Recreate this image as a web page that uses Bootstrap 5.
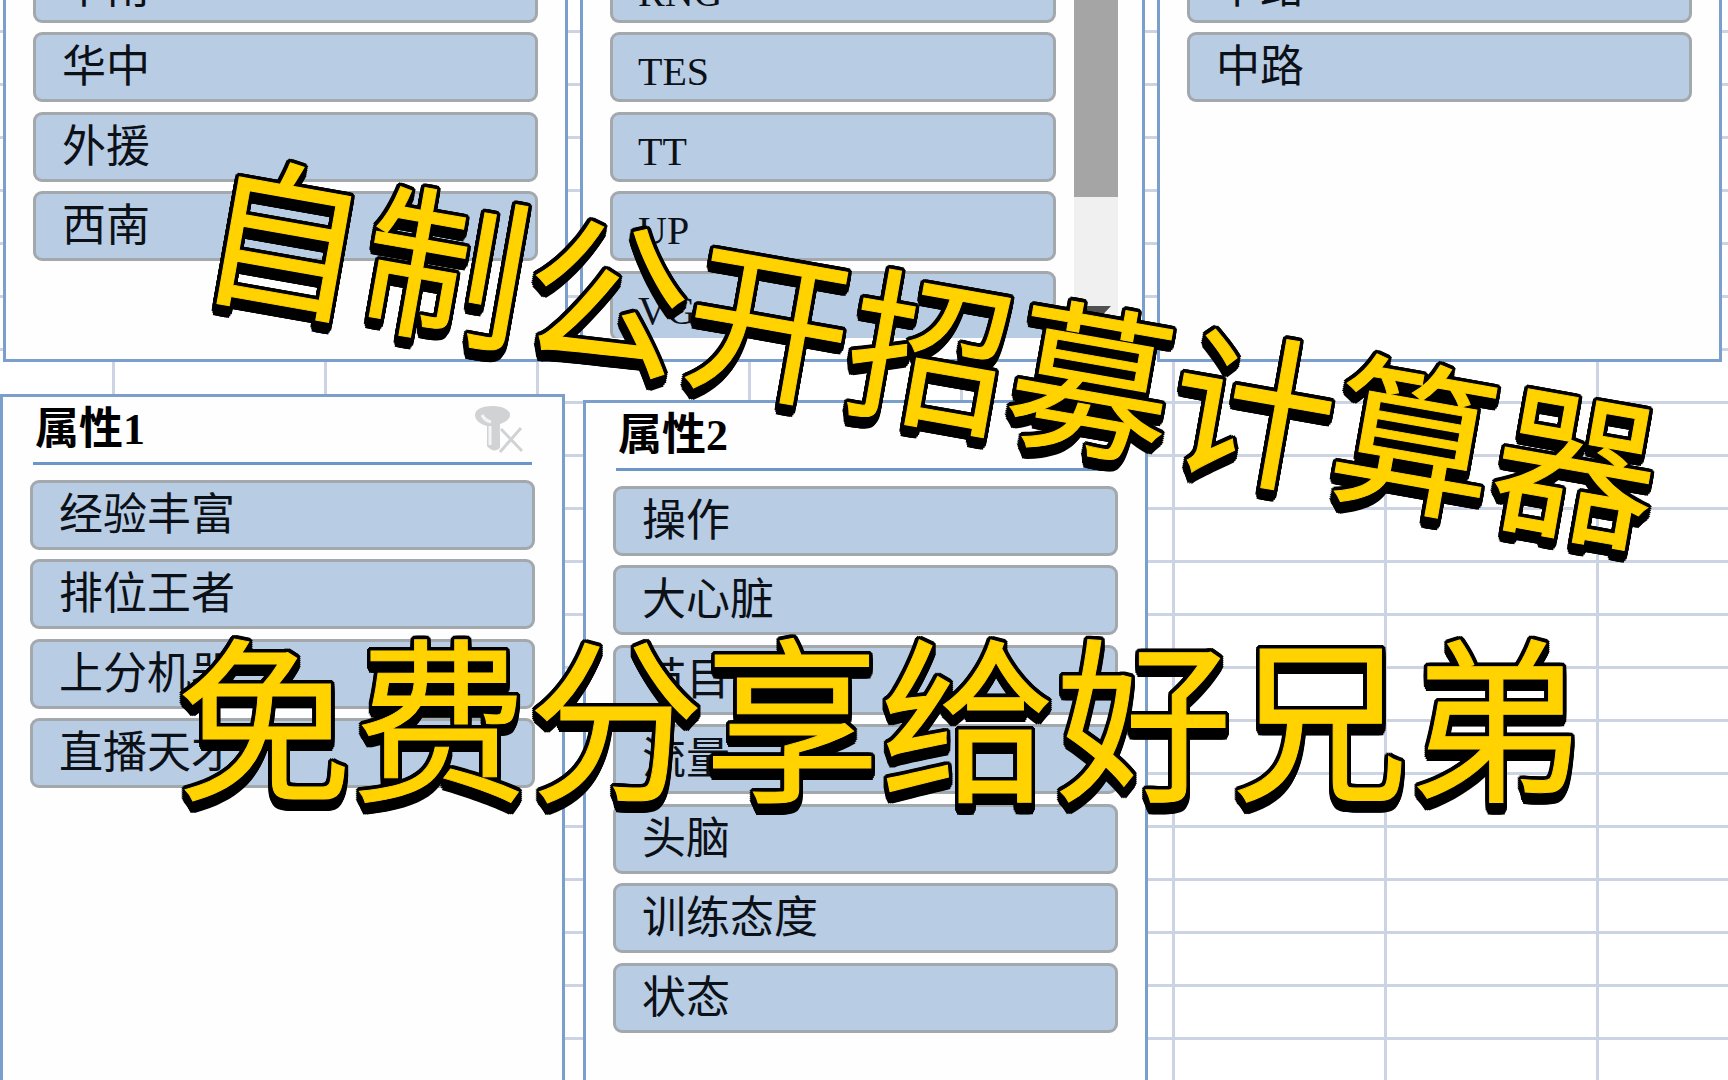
<!DOCTYPE html>
<html lang="zh-CN">
<head>
<meta charset="utf-8">
<meta name="viewport" content="width=device-width, initial-scale=1">
<title>自制公开招募计算器</title>
<link rel="stylesheet" href="https://cdn.jsdelivr.net/npm/bootstrap@5.3.0/dist/css/bootstrap.min.css">
<style>
  body { background: #fff; font-family: "Noto Sans CJK SC", sans-serif; }

  /* Worksheet with its cell lines */
  .sheet {
    height: 100vh;
    background-image:
      linear-gradient(to bottom, #ccd3e3 3px, transparent 3px),
      linear-gradient(to right, #ccd3e3 3px, transparent 3px);
    background-size: 100% 53px, 212px 100%;
    background-position: 0 30px, 112px 0;
  }
  .slicers-top { display: grid; grid-template-columns: repeat(3, 1fr); gap: 12px; padding: 0 6px 0 3px; height: 362px; }
  .slicers-bottom { display: grid; grid-template-columns: repeat(2, 565px); gap: 18px; padding-top: 32px; min-height: calc(100vh - 362px); }

  .slicer { background: #fefefe; border: 3px solid #7a9fcd; padding: 0 27px; min-width: 0; }
  .slicers-top .slicer { border-top: 0; overflow: hidden; }
  .slicers-bottom .slicer { border-bottom: 0; }
  .slicer-lower { margin-top: 6px; }
  .slicer-scroll { padding-right: 24px; padding-bottom: 21px; gap: 18px; }

  .slicer-head { height: 68px; margin: 0 3px 15px; border-bottom: 3px solid #6c96c8; }
  .slicer-head h2 { font-size: 44px; line-height: 56px; font-weight: 700; color: #000; padding-left: 2px; }
  .slicer-head .digit { font-family: "Liberation Serif", serif; }
  .clear-filter { width: 50px; height: 48px; margin: 9px 8px 0 0; }

  .slicer-list { display: flex; flex-direction: column; gap: 9px; }
  .slicers-top .slicer-list { margin-top: -47px; }
  .slicer-item {
    height: 70px; flex: none; width: 100%;
    padding: 0 26px 8px; text-align: left;
    background: #b8cce4; color: #0c1118;
    border: 3px solid #a3a8ad; border-radius: 9px;
    font-size: 44px; line-height: 56px; font-weight: 400;
  }
  .slicer-item:nth-child(even) { margin-bottom: 1px; }
  .latin .slicer-item { font-family: "Liberation Serif", serif; font-size: 40px; padding: 9px 25px 0; }

  .scroll-track { width: 44px; flex: none; background: #f0f0f0; }
  .scroll-thumb { height: 197px; background: #a5a5a5; }

  /* Slanted and straight captions over the sheet */
  .caption-text {
    position: absolute; margin: 0; white-space: nowrap; line-height: 1; font-weight: 400; color: #ffd200;
    -webkit-text-stroke: 1px #ffd200;
    text-shadow:
      4px 0 #000, 3px 3px #000, 0 4px #000, -3px 3px #000, -4px 0 #000, -3px -3px #000, 0 -4px #000, 3px -3px #000,
      4px -2px #000, 2px -4px #000, -2px -4px #000, -4px -2px #000,
      4px 2px #000, -4px 2px #000, 4px 4px #000, -4px 4px #000, 4px 6px #000, -4px 6px #000, 0 8px #000,
      4px 8px #000, -4px 8px #000, 3px 10px #000, -3px 10px #000, 2px 12px #000, -2px 12px #000, 0 12px #000;
    pointer-events: none;
  }
  .caption-slanted { left: 932px; top: 344px; font-size: 164px; transform: translate(-50%, -50%) rotate(10deg); }
  .caption-straight { left: 880px; top: 712px; font-size: 176px; transform: translate(-50%, -50%); }
</style>
</head>
<body>
<main class="sheet position-relative overflow-hidden">
  <div class="slicers-top">
    <section class="slicer" aria-label="地区">
      <div class="slicer-list">
        <button type="button" class="slicer-item">华南</button>
        <button type="button" class="slicer-item">华中</button>
        <button type="button" class="slicer-item">外援</button>
        <button type="button" class="slicer-item">西南</button>
      </div>
    </section>
    <section class="slicer slicer-scroll d-flex" aria-label="战队">
      <div class="flex-grow-1 overflow-hidden">
        <div class="slicer-list latin">
          <button type="button" class="slicer-item">RNG</button>
          <button type="button" class="slicer-item">TES</button>
          <button type="button" class="slicer-item">TT</button>
          <button type="button" class="slicer-item">UP</button>
          <button type="button" class="slicer-item">VG</button>
        </div>
      </div>
      <div class="scroll-track d-flex flex-column justify-content-between align-items-center">
        <div class="scroll-thumb w-100"></div>
        <svg class="mb-3" width="30" height="16" viewBox="0 0 30 16" aria-hidden="true"><path d="M0 0h30L15 16z" fill="#505050"/></svg>
      </div>
    </section>
    <section class="slicer" aria-label="位置">
      <div class="slicer-list">
        <button type="button" class="slicer-item">下路</button>
        <button type="button" class="slicer-item">中路</button>
      </div>
    </section>
  </div>

  <div class="slicers-bottom">
    <section class="slicer">
      <div class="slicer-head d-flex justify-content-between align-items-start">
        <h2 class="m-0">属性<span class="digit">1</span></h2>
        <button type="button" class="clear-filter btn p-0 border-0 d-flex" aria-label="清除筛选器">
          <svg width="50" height="48" viewBox="0 0 50 48" aria-hidden="true">
            <path d="M1 9C1 3 9 0 19 0s17 4 17 9c0 4-4 7-10 9v24c-4 4-9 3-13-2V20C6 18 1 14 1 9z" fill="#d0d2d4"/>
            <path d="M16 20v19M8 9c2 4 5 6 9 7" fill="none" stroke="#f5f5f5" stroke-width="3"/>
            <path d="M27 23l21 22M47 22L26 46" fill="none" stroke="#fff" stroke-width="5"/>
            <path d="M27 23l21 22M47 22L26 46" fill="none" stroke="#d0d2d4" stroke-width="3"/>
          </svg>
        </button>
      </div>
      <div class="slicer-list">
        <button type="button" class="slicer-item">经验丰富</button>
        <button type="button" class="slicer-item">排位王者</button>
        <button type="button" class="slicer-item">上分机器</button>
        <button type="button" class="slicer-item">直播天才</button>
      </div>
    </section>
    <section class="slicer slicer-lower">
      <div class="slicer-head">
        <h2 class="m-0">属性<span class="digit">2</span></h2>
      </div>
      <div class="slicer-list">
        <button type="button" class="slicer-item">操作</button>
        <button type="button" class="slicer-item">大心脏</button>
        <button type="button" class="slicer-item">节目</button>
        <button type="button" class="slicer-item">流量</button>
        <button type="button" class="slicer-item">头脑</button>
        <button type="button" class="slicer-item">训练态度</button>
        <button type="button" class="slicer-item">状态</button>
      </div>
    </section>
  </div>

  <h1 class="caption-text caption-slanted">自制公开招募计算器</h1>
  <p class="caption-text caption-straight">免费分享给好兄弟</p>
</main>
<script src="https://cdn.jsdelivr.net/npm/bootstrap@5.3.0/dist/js/bootstrap.bundle.min.js"></script>
</body>
</html>
